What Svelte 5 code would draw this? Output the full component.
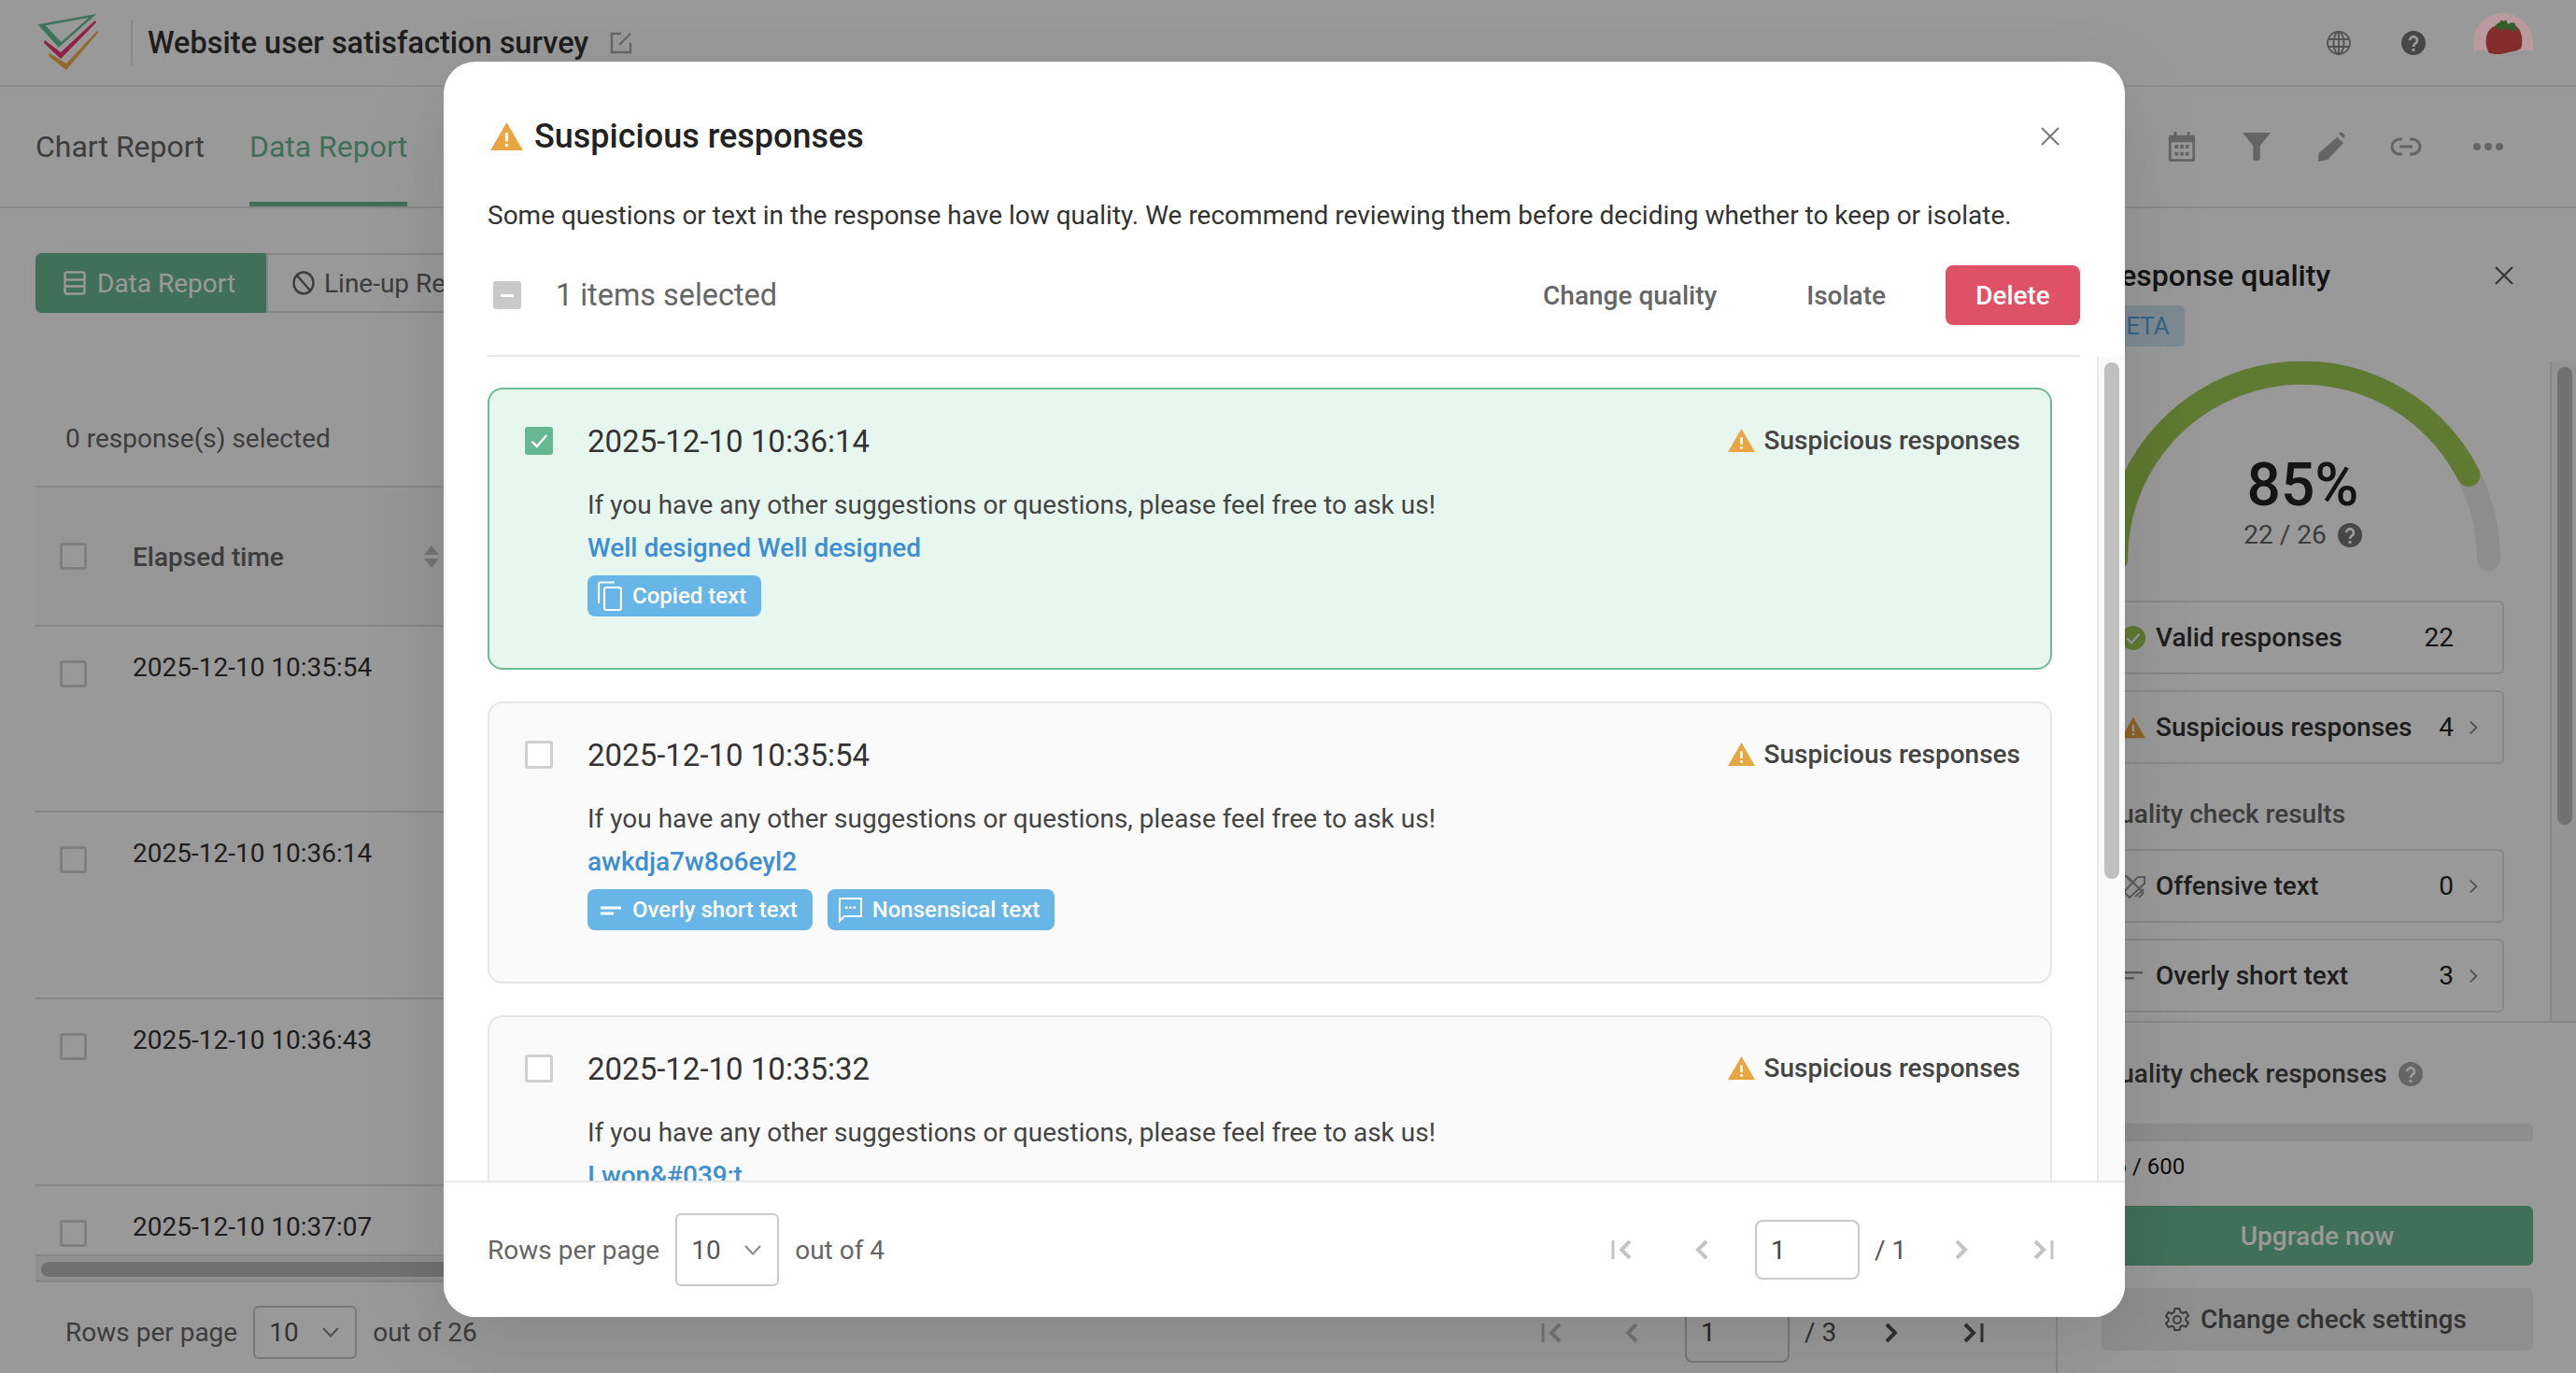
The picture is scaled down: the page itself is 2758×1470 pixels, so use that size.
<script>
  const bgRows = ['2025-12-10 10:35:54', '2025-12-10 10:36:14', '2025-12-10 10:36:43', '2025-12-10 10:37:07'];
  const cards = [
    { time: '2025-12-10 10:36:14', answer: 'Well designed Well designed', tags: [['copy', 'Copied text']], on: true },
    { time: '2025-12-10 10:35:54', answer: 'awkdja7w8o6eyl2', tags: [['short', 'Overly short text'], ['chat', 'Nonsensical text']], on: false },
    { time: '2025-12-10 10:35:32', answer: 'I won&#039;t', tags: [], on: false }
  ];
  const question = 'If you have any other suggestions or questions, please feel free to ask us!';
</script>

{#snippet warn(cls)}
  <svg class={cls} viewBox="1 2 22 19"><path fill="#e9a53f" d="M12 2 23 21H1z"/><path fill="#fff" d="M11 9h2v6h-2zM11 16.5h2v2h-2z"/></svg>
{/snippet}

{#snippet help(cls)}
  <svg class={cls} viewBox="0 0 24 24"><circle cx="12" cy="12" r="12" fill="currentColor"/><path fill="none" stroke="#fff" stroke-width="2.6" d="M8.400 9.400a3.600 3.600 0 1 1 5.600 3c-1.400.9-2 1.600-2 3.200"/><circle cx="12" cy="19" r="1.600" fill="#fff"/></svg>
{/snippet}

{#snippet check()}
  <svg class="tick" viewBox="0 0 24 24"><path fill="none" stroke="#fff" stroke-width="2.2" d="M5 12.500l5 5L19.500 6.500"/></svg>
{/snippet}

{#snippet chev(cls)}
  <svg class={cls} viewBox="0 0 12 20"><path fill="none" stroke="currentColor" stroke-width="2.200" d="M2 2l8 8-8 8"/></svg>
{/snippet}

{#snippet pager(total, nextOn)}
  <div class="pager" class:pager-on={nextOn}>
    <svg class="pg pg-first" viewBox="0 0 22 22"><path fill="none" stroke="currentColor" stroke-width="3" d="M2 1v20"/><path fill="none" stroke="currentColor" stroke-width="4" d="M20 2l-9 9 9 9"/></svg>
    <svg class="pg pg-prev" viewBox="0 0 14 22"><path fill="none" stroke="currentColor" stroke-width="4" d="M12 2l-9 9 9 9"/></svg>
    <div class="page-input">1</div>
    <span class="page-total">/ {total}</span>
    <svg class="pg pg-next next" viewBox="0 0 14 22"><path fill="none" stroke="currentColor" stroke-width="4" d="M2 2l9 9-9 9"/></svg>
    <svg class="pg pg-last next" viewBox="0 0 22 22"><path fill="none" stroke="currentColor" stroke-width="3" d="M20 1v20"/><path fill="none" stroke="currentColor" stroke-width="4" d="M2 2l9 9-9 9"/></svg>
  </div>
{/snippet}

{#snippet rows(note, big)}
  <div class="rows-per">
    <span>Rows per page</span>
    <div class="select" class:select-big={big}><span>10</span><svg viewBox="0 0 20 13"><path fill="none" stroke="currentColor" stroke-width="2" d="M2 2l8 8.500L18 2"/></svg></div>
    <span>{note}</span>
  </div>
{/snippet}

<div class="page">
  <header class="top">
    <svg class="logo" viewBox="0 0 70 64">
      <path fill="none" stroke="#6cc09a" stroke-width="2.600" stroke-linejoin="miter" d="M3 12 59 2 23 34z"/>
      <path fill="#6cc09a" d="M3 12l20 21 3-2.600-19-20z"/>
      <path fill="#f03a74" d="M8 28l-1 3 18 17 38-39-1.500-2L25 41z"/>
      <path fill="#f5b04a" d="M13 42l-1 3 19 15 34-40-1-2-33 35z"/>
    </svg>
    <div class="top-sep"></div>
    <h1>Website user satisfaction survey</h1>
    <svg class="ext" viewBox="0 0 24 24"><path fill="none" stroke="#aaa" stroke-width="2.400" d="M12 2H2v20h20V12M22 2 10 14"/></svg>
    <div class="top-right">
      <svg class="globe" viewBox="0 0 26 26"><g fill="none" stroke="#8a8a8a" stroke-width="1.800"><circle cx="13" cy="13" r="12"/><ellipse cx="13" cy="13" rx="5.500" ry="12"/><path d="M2 9h22M2 17h22M13 1v24"/></g></svg>
      <span class="top-help">{@render help('help-i')}</span>
      <svg class="avatar" viewBox="0 0 64 44">
        <path fill="#bb9a9f" d="M0 32a32 32 0 0 1 64 0v9c-6-2-9 0-14-1-6-1-10 2-18 2s-14-3-22-2c-4 .5-7-1-10 1z"/>
        <path fill="#842d2d" d="M15 22c3-7 10-10 17-9 6-2 15-1 18 6 3 6 3 14 1 19-4 2-6 3-9 3-7 1-9 3-15 3-5 0-10 0-11-3-3-6-3-13-1-19z"/>
        <path fill="#32602a" d="M23 15c2-5 5-3 7-8 2 2 3 2 5 0l2 5c3-2 6-2 8-1 0 3 1 6 1 8-5 1-7-1-9-3-3 3-9 2-14-1z"/>
      </svg>
    </div>
  </header>

  <nav class="tabs">
    <span class="tab">Chart Report</span>
    <span class="tab tab-on">Data Report</span>
    <div class="tools">
      <svg class="tool" viewBox="0 0 30 34"><path fill="#a8a8a8" d="M2 4h4V0h3v4h12V0h3v4h4a2 2 0 0 1 2 2v26a2 2 0 0 1-2 2H2a2 2 0 0 1-2-2V6a2 2 0 0 1 2-2z"/><path fill="#fff" d="M3 12h24v19H3z"/><path fill="#a8a8a8" d="M7 15h4v4H7zM13 15h4v4h-4zM19 15h4v4h-4zM7 23h4v4H7zM13 23h4v4h-4zM19 23h4v4h-4z"/></svg>
      <svg class="tool" viewBox="0 0 28 28"><path fill="#a8a8a8" d="M0 0h28L17.500 13v13a2 2 0 0 1-2 2h-3a2 2 0 0 1-2-2V13z"/></svg>
      <svg class="tool" viewBox="0 0 30 32"><path fill="#a8a8a8" d="M21 6l7 6-17 18-10 2 .5-9zM23 2l2-2 5 4-2 3z"/></svg>
      <svg class="tool tool-link" viewBox="0 0 34 20"><g fill="none" stroke="#a8a8a8" stroke-width="3"><path d="M13 2H10a8 8 0 0 0 0 16h3M21 2h3a8 8 0 0 1 0 16h-3M10 10h14"/></g></svg>
      <svg class="tool tool-dots" viewBox="0 0 32 8"><g fill="#a8a8a8"><circle cx="4" cy="4" r="4"/><circle cx="16" cy="4" r="4"/><circle cx="28" cy="4" r="4"/></g></svg>
    </div>
  </nav>

  <div class="work">
    <main class="main">
      <div class="segment">
        <button class="seg seg-on">
          <svg viewBox="0 0 24 26"><g fill="none" stroke="#fff" stroke-width="2.400"><rect x="1.500" y="1.500" width="21" height="23" rx="2"/><path d="M1.500 9.500h21M1.500 16.500h21"/></g></svg>
          Data Report
        </button>
        <button class="seg seg-off">
          <svg viewBox="0 0 24 26"><g fill="none" stroke="#666" stroke-width="2.400"><ellipse cx="12" cy="13" rx="10.500" ry="11.500"/><path d="M5 5l14 16"/></g></svg>
          Line-up Report
        </button>
      </div>
      <div class="selected">0 response(s) selected</div>
      <div class="table">
        <div class="thead">
          <span class="cb cb-bg"></span>
          <span class="th">Elapsed time</span>
          <svg class="sort" viewBox="0 0 18 24"><path fill="#c4c4c4" d="M9 0l8 10H1zM9 24l8-10H1z"/></svg>
        </div>
        {#each bgRows as row, i}
          <div class="trow" class:trow-first={i === 0}>
            <span class="cb cb-bg"></span>
            <span class="td">{row}</span>
          </div>
        {/each}
      </div>
      <div class="hscroll"><div class="hthumb"></div></div>
      <div class="main-foot">
        {@render rows('out of 26', false)}
        {@render pager(3, true)}
      </div>
    </main>

    <aside class="side">
      <div class="side-scroll">
        <div class="side-body">
          <div class="side-head"><h2>Response quality</h2><svg class="side-x" viewBox="0 0 20 20"><path fill="none" stroke="#555" stroke-width="2" d="M1 1l18 18M19 1 1 19"/></svg></div>
          <span class="beta">BETA</span>
          <div class="gauge">
            <svg class="gauge-arc" viewBox="0 0 431 226">
              <path fill="none" stroke="#ececec" stroke-width="25" stroke-linecap="round" d="M15.500 212a199.500 199.500 0 0 1 399 0"/>
              <path fill="none" stroke="#9ecb53" stroke-width="25" stroke-linecap="round" d="M15.500 212A199.500 199.500 0 0 1 393 121.400"/>
            </svg>
            <div class="pct">85%</div>
            <div class="ratio">22 / 26 {@render help('ratio-help')}</div>
          </div>
          <div class="q-card">
            <svg class="q-icon" viewBox="0 0 26 26"><circle cx="13" cy="13" r="13" fill="#9ecb53"/><path fill="none" stroke="#fff" stroke-width="2.400" d="M6.500 13.500l4.500 4.500 8.500-9"/></svg>
            <span class="q-label">Valid responses</span><span class="q-num">22</span><span class="q-chev"></span>
          </div>
          <div class="q-card q-gap">
            {@render warn('q-icon')}
            <span class="q-label">Suspicious responses</span><span class="q-num">4</span><span class="q-chev">{@render chev('q-chev-i')}</span>
          </div>
          <div class="q-title">Quality check results</div>
          <div class="q-card">
            <svg class="q-icon" viewBox="0 0 26 26"><g fill="none" stroke="#999" stroke-width="2"><path d="M3 19 18 3h7v7L9 25zM6 2l18 18M15 24l9-8M19 25l5-5"/><path d="M1 2h4l6 6"/></g></svg>
            <span class="q-label">Offensive text</span><span class="q-num">0</span><span class="q-chev">{@render chev('q-chev-i')}</span>
          </div>
          <div class="q-card q-gap">
            <svg class="q-icon" viewBox="0 0 26 26"><path fill="#999" d="M0 8h23v2.500H0zM0 14h14v2.500H0z"/></svg>
            <span class="q-label">Overly short text</span><span class="q-num">3</span><span class="q-chev">{@render chev('q-chev-i')}</span>
          </div>
        </div>
        <div class="side-track"><div class="side-thumb"></div></div>
      </div>
      <div class="side-foot">
        <div class="qcr">Quality check responses {@render help('qcr-help')}</div>
        <div class="bar"></div>
        <div class="quota">26 / 600</div>
        <button class="upgrade">Upgrade now</button>
        <button class="settings">
          <svg viewBox="0 0 26 26"><g fill="none" stroke="#666" stroke-width="2"><circle cx="13" cy="13" r="4"/><path d="M10.500 1h5l1 3.500 2.500 1.300 3.500-1.300 2.500 4.300-2.700 2.400v2.600l2.700 2.400-2.500 4.300-3.500-1.300-2.500 1.300-1 3.500h-5l-1-3.500L7 19.700l-3.500 1.300L1 16.700l2.700-2.400v-2.600L1 9.300 3.500 5 7 6.300l2.500-1.300z"/></g></svg>
          Change check settings
        </button>
      </div>
    </aside>
  </div>

  <div class="overlay"></div>

  <section class="modal">
    <div class="m-head">
      <div class="m-title">
        {@render warn('m-warn')}
        <h3>Suspicious responses</h3>
        <svg class="m-x" viewBox="0 0 20 20"><path fill="none" stroke="#777" stroke-width="2" d="M1 1l18 18M19 1 1 19"/></svg>
      </div>
      <p class="m-desc">Some questions or text in the response have low quality. We recommend reviewing them before deciding whether to keep or isolate.</p>
      <div class="m-bar">
        <span class="cb cb-mixed"><i></i></span>
        <span class="m-count">1 items selected</span>
        <button class="txt-btn">Change quality</button>
        <button class="txt-btn">Isolate</button>
        <button class="del-btn">Delete</button>
      </div>
    </div>

    <div class="m-list">
      <div class="m-cards">
        {#each cards as card}
          <article class="card" class:card-on={card.on}>
            <span class="cb cb-card" class:cb-on={card.on}>{#if card.on}{@render check()}{/if}</span>
            <div class="card-main">
              <div class="card-top">
                <span class="card-time">{card.time}</span>
                <span class="card-flag">{@render warn('flag-i')}Suspicious responses</span>
              </div>
              <div class="card-q">{question}</div>
              <div class="card-a">{card.answer}</div>
              <div class="tags">
                {#each card.tags as tag}
                  <span class="tag">
                    {#if tag[0] === 'copy'}
                      <svg viewBox="0 0 26 32"><g fill="none" stroke="#fff" stroke-width="2.200"><path d="M18 1.500H3a2 2 0 0 0-2 2V24"/><rect x="7" y="7" width="18" height="24" rx="2"/></g></svg>
                    {:else if tag[0] === 'short'}
                      <svg viewBox="0 0 26 32"><path fill="#fff" d="M3 12.500h22v3H3zM3 18.500h14v3H3z"/></svg>
                    {:else}
                      <svg viewBox="0 0 26 32"><path fill="none" stroke="#fff" stroke-width="2" d="M2 4h23v19H7l-5 5z"/><path fill="#fff" d="M8 12.500h2.400v2.400H8zM12.300 12.500h2.400v2.400h-2.400zM16.600 12.500H19v2.400h-2.400z"/></svg>
                    {/if}
                    {tag[1]}
                  </span>
                {/each}
              </div>
            </div>
          </article>
        {/each}
      </div>
      <div class="m-track"><div class="m-thumb"></div></div>
    </div>

    <div class="m-foot">
      {@render rows('out of 4', true)}
      {@render pager(1, false)}
    </div>
  </section>
</div>

<style>
  :global(body) { margin: 0; background: #fff; }
  * { box-sizing: border-box; }
  .page { position: relative; width: 2758px; height: 1470px; overflow: hidden; background: #fff; font-family: Roboto, "Liberation Sans", sans-serif; color: #333; font-size: 28px; }
  button { font: inherit; border: 0; background: none; color: inherit; padding: 0; }
  h1, h2, h3, p { margin: 0; font-weight: 500; }

  .top { height: 93px; display: flex; align-items: center; padding-left: 40px; border-bottom: 2px solid #ececec; position: relative; }
  .logo { width: 70px; height: 64px; flex: none; margin-top: 3px; }
  .top-sep { width: 2px; height: 50px; background: #e4e4e4; margin-left: 30px; flex: none; }
  h1 { font-size: 32.5px; color: #333; margin-left: 16px; }
  .ext { width: 24px; height: 24px; margin-left: 23px; }
  .top-right { margin-left: auto; display: flex; align-items: center; padding-right: 46px; }
  .globe { width: 26px; height: 26px; }
  .top-help { color: #777; display: flex; margin-left: 54px; }
  .help-i { width: 26px; height: 26px; }
  .avatar { width: 64px; height: 44px; margin-left: 51px; margin-top: -20px; position: relative; z-index: 2; }

  .tabs { height: 130px; border-bottom: 2px solid #e2e2e2; display: flex; padding-left: 38px; font-size: 32px; color: #666; }
  .tab { height: 128px; display: flex; align-items: center; margin-right: 48px; border-bottom: 5px solid transparent; padding-top: 5px; }
  .tab-on { color: #6cbb94; border-bottom-color: #6cbb94; }
  .tools { margin-left: auto; height: 128px; display: flex; align-items: center; padding-right: 78px; gap: 50px; }
  .tool { width: 30px; height: 32px; }
  .tool-link { width: 34px; height: 20px; margin-left: -2px; }
  .tool-dots { width: 32px; height: 8px; margin-left: 5px; }

  .work { display: flex; height: 1247px; }
  .main { width: 2201px; flex: none; padding-top: 48px; display: flex; flex-direction: column; }
  .segment { display: flex; height: 64px; margin-left: 38px; }
  .seg { height: 64px; display: flex; align-items: center; border: 2px solid #e0e0e0; color: #666; white-space: nowrap; }
  .seg svg { width: 24px; height: 26px; flex: none; }
  .seg-on { width: 247px; gap: 12px; padding-left: 28px; background: #6cbb94; border-color: #6cbb94; color: #fff; border-radius: 6px 0 0 6px; }
  .seg-off { gap: 10px; padding: 0 30px 0 26px; }
  .selected { height: 185px; padding: 120px 0 0 70px; line-height: 30px; color: #666; }
  .table { height: 823px; margin-left: 38px; border-top: 2px solid #e2e2e2; overflow: hidden; }
  .thead { height: 147px; display: flex; align-items: center; padding-left: 26px; gap: 49px; background: #fafafa; position: relative; }
  .th { font-weight: 500; color: #666; margin-top: 1px; }
  .sort { position: absolute; left: 415px; top: 62px; width: 18px; height: 24px; }
  .trow { height: 200px; border-top: 2px solid #e2e2e2; display: flex; padding: 36px 0 0 26px; gap: 49px; }
  .trow-first { height: 199px; }
  .td { line-height: 30px; margin-top: -7px; }
  .trow .cb { margin-top: 0; }
  .cb { display: block; width: 30px; height: 30px; flex: none; border: 3px solid #d0d0d0; border-radius: 3px; background: #fff; }
  .cb-bg { width: 29px; height: 29px; border-color: #d4d4d4; }
  .hscroll { height: 30px; margin-left: 38px; background: #f1f1f1; border-top: 2px solid #e0e0e0; border-bottom: 3px solid #e0e0e0; padding: 6px; }
  .hthumb { width: 1400px; height: 16px; border-radius: 8px; background: #bdbdbd; }
  .main-foot { flex: 1; display: flex; align-items: center; justify-content: space-between; padding: 10px 77px 0 70px; }

  .rows-per { display: flex; align-items: center; gap: 17px; color: #666; }
  .select { width: 111px; height: 57px; border: 2px solid #c9c9c9; border-radius: 6px; display: flex; align-items: center; justify-content: space-between; padding: 0 16px 0 15px; color: #555; background: #fff; }
  .select-big { height: 78px; }
  .select svg { width: 20px; height: 13px; color: #888; }

  .pager { display: flex; align-items: center; color: #c4c4c4; }
  .pg { height: 22px; flex: none; }
  .pg-first, .pg-last { width: 22px; }
  .pg-prev, .pg-next { width: 14px; }
  .pg-prev { margin: 0 50px 0 68px; }
  .pg-next { margin: 0 70px 0 50px; }
  .pager-on .next { color: #555; }
  .page-input { width: 112px; height: 64px; border: 2px solid #c9c9c9; border-radius: 8px; display: flex; align-items: center; padding-left: 15px; color: #444; background: #fff; }
  .page-total { margin-left: 16px; width: 36px; color: #555; white-space: nowrap; }

  .side { width: 557px; flex: none; border-left: 2px solid #e2e2e2; display: flex; flex-direction: column; }
  .side-scroll { height: 872px; flex: none; display: flex; border-bottom: 2px solid #e2e2e2; }
  .side-body { width: 527px; flex: none; padding: 50px 0 0 47px; }
  .side-head { width: 441px; height: 44px; display: flex; align-items: center; justify-content: space-between; }
  h2 { font-size: 32px; color: #222; }
  .side-x { width: 20px; height: 20px; }
  .beta { display: inline-block; width: 89px; height: 44px; line-height: 44px; margin-top: 10px; padding-left: 10px; border-radius: 6px; background: #cfe6f3; color: #5aa6d8; font-size: 26px; vertical-align: top; }
  .gauge { position: relative; width: 431px; height: 256px; margin-top: 16px; }
  .gauge-arc { display: block; width: 431px; height: 226px; }
  .pct { position: absolute; left: 0; width: 431px; top: 95px; text-align: center; font-size: 64px; font-weight: 500; line-height: 76px; color: #222; }
  .ratio { position: absolute; left: 0; width: 431px; top: 166px; line-height: 40px; font-size: 28px; color: #666; display: flex; justify-content: center; align-items: center; gap: 12px; }
  .ratio-help { width: 26px; height: 26px; color: #777; }
  .q-card { width: 431px; height: 79px; border: 2px solid #e2e2e2; border-radius: 6px; display: flex; align-items: center; padding-left: 19px; color: #333; font-weight: 500; }
  .q-gap { margin-top: 17px; }
  .q-icon { width: 26px; height: 26px; flex: none; margin-right: 11px; }
  .q-label { flex: 1; }
  .q-num { font-weight: 400; color: #222; }
  .q-chev { width: 52px; display: flex; justify-content: flex-end; padding-right: 26px; color: #888; }
  .q-chev-i { width: 10px; height: 18px; }
  .q-title { height: 91px; padding-top: 36px; line-height: 36px; color: #666; font-weight: 500; }
  .side-track { width: 28px; flex: none; border-left: 2px solid #e2e2e2; background: #f7f7f7; padding: 0 4px 0 6px; margin-top: 164px; }
  .side-thumb { width: 16px; height: 490px; border-radius: 8px; background: #bdbdbd; margin-top: 6px; }
  .side-foot { padding: 0 46px 0 47px; flex: 1; }
  .qcr { height: 108px; padding-top: 37px; font-weight: 500; color: #444; display: flex; align-items: flex-start; gap: 12px; line-height: 36px; }
  .qcr-help { width: 26px; height: 26px; margin-top: 5px; color: #aaa; }
  .bar { height: 19px; border-radius: 4px; background: #ececec; }
  .quota { height: 69px; padding-top: 12px; line-height: 30px; font-size: 24px; color: #111; }
  .upgrade { display: block; width: 100%; height: 64px; border-radius: 6px; background: #6cbb94; color: #fff; font-weight: 500; }
  .settings { width: 100%; height: 67px; margin-top: 24px; border-radius: 6px; background: #eee; color: #555; font-weight: 500; display: flex; align-items: center; justify-content: center; gap: 12px; padding-right: 3px; }
  .settings svg { width: 26px; height: 26px; }

  .overlay { position: absolute; inset: 0; background: rgba(0, 0, 0, .4); }

  .modal { position: absolute; left: 475px; top: 66px; width: 1800px; height: 1344px; background: #fff; border-radius: 34px; display: flex; flex-direction: column; overflow: hidden; box-shadow: 0 30px 90px rgba(0, 0, 0, .12); }
  .m-head { flex: none; margin: 0 48px 0 47px; padding-top: 58px; padding-bottom: 32px; border-bottom: 2px solid #e8e8e8; }
  .m-title { height: 44px; display: flex; align-items: center; }
  .m-warn { width: 35px; height: 30px; margin: 0 12px 0 3px; flex: none; }
  h3 { font-size: 36px; color: #222; font-weight: 500; }
  .m-x { width: 20px; height: 20px; margin-left: auto; margin-right: 22px; }
  .m-desc { margin-top: 41px; line-height: 44px; font-weight: 400; color: #333; white-space: nowrap; }
  .m-bar { margin-top: 31px; height: 64px; display: flex; align-items: center; gap: 32px; }
  .cb-mixed { margin-left: 6px; background: #c9c9c9; border-color: #c9c9c9; display: flex; align-items: center; justify-content: center; }
  .cb-mixed i { display: block; width: 14px; height: 3px; background: #fff; }
  .m-count { font-size: 32.4px; color: #666; margin: 0 auto 0 5px; }
  .txt-btn { height: 64px; padding: 0 32px; color: #666; font-weight: 500; }
  .del-btn { width: 144px; height: 64px; border-radius: 8px; background: #df5166; color: #fff; font-weight: 500; }
  .m-list { flex: 1; min-height: 0; display: flex; overflow: hidden; }
  .m-cards { flex: 1; min-width: 0; padding: 33px 0 0 47px; overflow: hidden; }
  .m-track { width: 30px; flex: none; background: #fafafa; border-left: 2px solid #e8e8e8; padding: 6px 6px 0 6px; }
  .m-thumb { width: 16px; height: 553px; border-radius: 8px; background: #c0c0c0; }

  .card { width: 1675px; height: 302px; margin-bottom: 34px; padding: 32px 32px 0 38px; border: 2px solid #e6e6e6; border-radius: 16px; background: #fafafa; display: flex; gap: 37px; }
  .card-on { background: #e7f6ef; border-color: #6cbb94; }
  .cb-card { margin-top: 8px; }
  .cb-on { background: #66b893; border-color: #66b893; display: flex; align-items: center; justify-content: center; }
  .tick { width: 26px; height: 26px; flex: none; }
  .card-main { flex: 1; min-width: 0; }
  .card-top { height: 46px; display: flex; justify-content: space-between; align-items: center; }
  .card-time { font-size: 33px; font-weight: 400; color: #333; }
  .card-flag { display: flex; align-items: center; gap: 10px; font-weight: 500; color: #444; margin-top: -1px; }
  .flag-i { width: 29px; height: 25px; }
  .card-q { margin-top: 23px; line-height: 46px; color: #444; }
  .card-a { line-height: 45px; color: #3d8fd1; font-weight: 500; white-space: nowrap; }
  .tags { margin-top: 7px; display: flex; gap: 16px; }
  .tag { height: 44px; display: flex; align-items: center; gap: 11px; padding: 0 16px 0 11px; border-radius: 8px; background: #68b5e8; color: #fff; font-size: 24px; font-weight: 500; }
  .tag svg { width: 26px; height: 32px; flex: none; }

  .m-foot { height: 146px; flex: none; border-top: 2px solid #e8e8e8; display: flex; align-items: center; justify-content: space-between; padding: 0 76px 0 47px; background: #fff; }
</style>
